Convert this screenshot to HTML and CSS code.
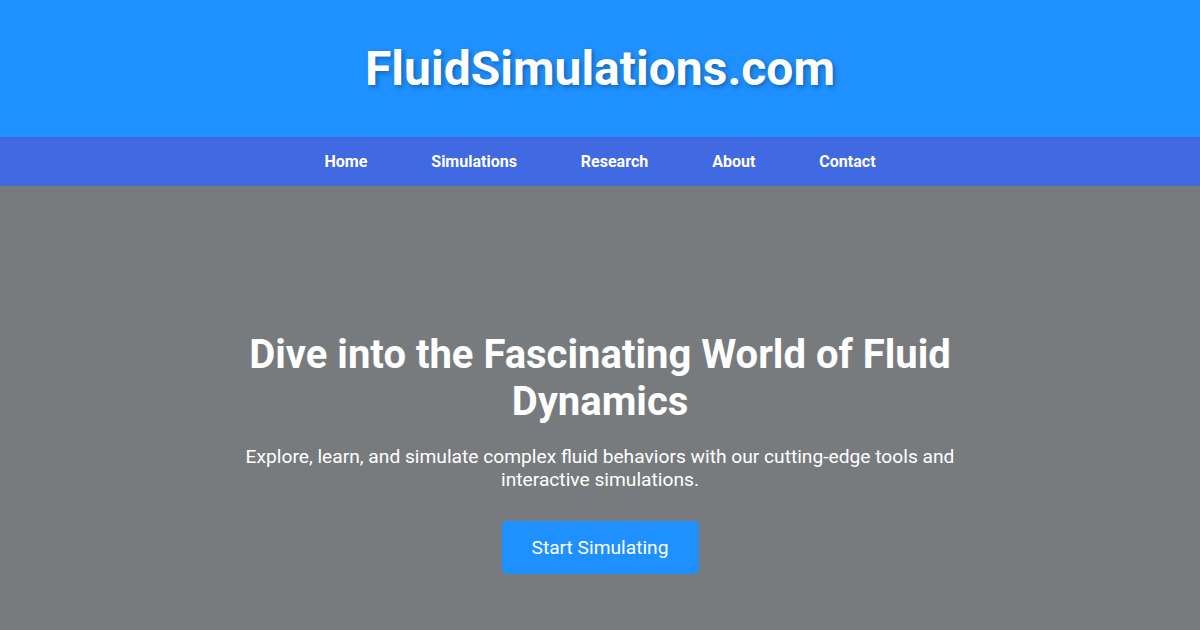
FILE: index.html
```html
<!DOCTYPE html>
<html lang="en">
<head>
    <meta charset="UTF-8">
    <meta name="viewport" content="width=device-width, initial-scale=1.0">
    <title>FluidSimulations.com</title>
    <link rel="stylesheet" href="styles.css">
</head>
<body>
    <header class="site-header">
        <h1>FluidSimulations.com</h1>
    </header>

    <nav class="main-nav">
        <a href="#">Home</a>
        <a href="#">Simulations</a>
        <a href="#">Research</a>
        <a href="#">About</a>
        <a href="#">Contact</a>
    </nav>

    <section class="hero">
        <div class="hero-content">
            <h2>Dive into the Fascinating World of Fluid Dynamics</h2>
            <p>Explore, learn, and simulate complex fluid behaviors with our cutting-edge tools and interactive simulations.</p>
            <a href="#" class="btn">Start Simulating</a>
        </div>
    </section>
</body>
</html>
```

FILE: styles.css
```css
/* general */
* {
    box-sizing: border-box;
    margin: 0;
    padding: 0;
}

body {
    font-family: Roboto, "Liberation Sans", Arial, sans-serif;
    color: #333;
    background: #787b7e;
}

/* header */
.site-header {
    background-color: #1e90ff;
    color: white;
    text-align: center;
    padding: 40px 0;
}

.site-header h1 {
    font-size: 48px;
    font-weight: 700;
    line-height: 57px;
    text-shadow: 2px 2px 4px rgba(0, 0, 0, 0.3);
}

/* navigation */
.main-nav {
    background-color: #4169e1;
    display: flex;
    justify-content: center;
    gap: 64px;
    padding: 15px 0;
}

.main-nav a {
    color: white;
    text-decoration: none;
    font-weight: 700;
    font-size: 16px;
    line-height: 19px;
}

/* hero */
.hero {
    background-color: #787b7e;
    color: white;
    text-align: center;
    height: 444px;
    padding-top: 145px;
}

.hero-content {
    max-width: 740px;
    margin: 0 auto;
}

.hero h2 {
    font-size: 40px;
    font-weight: 700;
    line-height: 47px;
    margin-bottom: 20px;
}

.hero p {
    font-size: 19.2px;
    line-height: 23px;
    margin-bottom: 30px;
}

.btn {
    display: inline-block;
    background-color: #1e90ff;
    color: white;
    text-decoration: none;
    font-size: 19.2px;
    line-height: 23px;
    padding: 15px 30px;
    border-radius: 5px;
}
```
